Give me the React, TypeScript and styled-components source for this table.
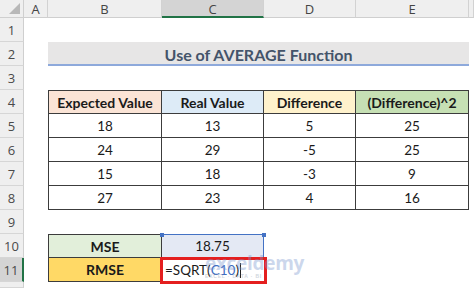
import React from "react";
import styled, { createGlobalStyle, css } from "styled-components";

const Global = createGlobalStyle`
  html, body { margin: 0; padding: 0; background: #ffffff; overflow: hidden; }
  #root { width: 474px; height: 288px; }
`;

const Sheet = styled.div`
  display: grid;
  grid-template-columns: 24px 24px 114px 102px 92px 113px 1fr;
  grid-template-rows: 18px repeat(11, 24px) 1fr;
  width: 474px;
  height: 288px;
  overflow: hidden;
  font-family: Lato, "Liberation Sans", sans-serif;
  background: #fff;
  position: relative;
`;

const Corner = styled.div`
  background: #efefef;
  border-right: 1px solid #cfcfcf;
  border-bottom: 1px solid #cfcfcf;
  box-sizing: border-box;
  position: relative;
  &::after {
    content: "";
    position: absolute;
    right: 3px;
    bottom: 3px;
    border-style: solid;
    border-width: 0 0 11px 11px;
    border-color: transparent transparent #b8b8b8 transparent;
  }
`;

const ColHeader = styled.div<{ $sel?: boolean }>`
  display: flex;
  align-items: center;
  justify-content: center;
  box-sizing: border-box;
  background: ${(p) => (p.$sel ? "#d4d4d4" : "#efefef")};
  border-right: 1px solid #d2d2d2;
  border-bottom: ${(p) => (p.$sel ? "2px solid #217346" : "1px solid #cfcfcf")};
  color: #444;
  font-family: "Open Sans", "Liberation Sans", sans-serif;
  font-size: 13px;
  padding-top: ${(p) => (p.$sel ? "1px" : "0")};
`;

const RowHeader = styled.div<{ $sel?: boolean }>`
  display: flex;
  align-items: center;
  justify-content: center;
  box-sizing: border-box;
  background: ${(p) => (p.$sel ? "#d4d4d4" : "#efefef")};
  border-bottom: 1px solid #d6d6d6;
  border-right: ${(p) => (p.$sel ? "2px solid #217346" : "1px solid #cfcfcf")};
  color: #4a4a4a;
  font-family: "Open Sans", "Liberation Sans", sans-serif;
  font-size: 13px;
`;

const Blank = styled.div<{ $span?: number }>`
  grid-column: span ${(p) => p.$span ?? 1};
`;

const Title = styled.div`
  grid-column: span 4;
  display: flex;
  align-items: center;
  justify-content: center;
  background: #e7e6e6;
  border-bottom: 2px solid #8ea9db;
  box-sizing: border-box;
  color: #44546a;
  font-weight: 700;
  font-size: 16px;
  padding-top: 2px;
`;

const TCell = styled.div<{ $bg?: string; $top?: boolean; $left?: boolean; $bold?: boolean }>`
  display: flex;
  align-items: center;
  justify-content: center;
  box-sizing: border-box;
  background: ${(p) => p.$bg ?? "#ffffff"};
  border-right: 1px solid #3c3c3c;
  border-bottom: 1px solid #3c3c3c;
  ${(p) => p.$top && css`border-top: 1px solid #3c3c3c;`}
  ${(p) => p.$left && css`border-left: 1px solid #3c3c3c;`}
  color: #1a1a1a;
  font-weight: ${(p) => (p.$bold ? 700 : 400)};
  font-size: ${(p) => (p.$bold ? "14px" : "13.5px")};
`;

const RefCell = styled.div`
  position: relative;
  display: flex;
  align-items: center;
  justify-content: center;
  box-sizing: border-box;
  background: #e4e9f4;
  border: 1px solid #4472c4;
  border-left: none;
  color: #1a1a1a;
  font-size: 13.5px;
`;

const Handle = styled.span<{ $side: "left" | "right" }>`
  position: absolute;
  top: -2px;
  ${(p) => (p.$side === "left" ? "left: -2px;" : "right: -3px;")}
  width: 4px;
  height: 4px;
  background: #4472c4;
`;

const EditCell = styled.div`
  position: relative;
  display: flex;
  align-items: center;
  justify-content: flex-start;
  box-sizing: border-box;
  background: #fff;
  padding-left: 3px;
  color: #1a1a1a;
  font-size: 13.5px;
`;

const RefText = styled.span`
  color: #3d6cc0;
`;

const Caret = styled.span`
  display: inline-block;
  width: 1px;
  height: 15px;
  background: #222;
  margin-left: 1px;
`;

const Highlight = styled.div`
  position: absolute;
  left: -2px;
  right: -3px;
  top: -1px;
  bottom: -2px;
  border: 3px solid #e41f1f;
  pointer-events: none;
`;

const Watermark = styled.div`
  position: absolute;
  left: 205px;
  top: 254px;
  display: flex;
  align-items: center;
  gap: 3px;
  opacity: 0.38;
  pointer-events: none;
`;

const WMText = styled.div`
  display: flex;
  flex-direction: column;
  line-height: 1;
`;

const WMBig = styled.span`
  font-family: "Open Sans", "Liberation Sans", sans-serif;
  font-weight: 700;
  font-size: 19px;
  color: #7c98cf;
  letter-spacing: -0.3px;
`;

const WMSmall = styled.span`
  font-family: "Liberation Sans", sans-serif;
  font-weight: 700;
  font-size: 5px;
  color: #8795aa;
  letter-spacing: 0.8px;
  margin-top: 1px;
`;

const cols = ["A", "B", "C", "D", "E", ""];
const headers: { label: string; bg: string }[] = [
  { label: "Expected Value", bg: "#fbe4d6" },
  { label: "Real Value", bg: "#ddebf7" },
  { label: "Difference", bg: "#fff2cc" },
  { label: "(Difference)^2", bg: "#c6e0b4" },
];
const data = [
  [18, 13, 5, 25],
  [24, 29, -5, 25],
  [15, 18, -3, 9],
  [27, 23, 4, 16],
];

export default function App() {
  return (
    <>
      <Global />
      <Sheet>
        <Corner />
        {cols.map((c, i) => (
          <ColHeader key={i} $sel={c === "C"}>
            {c}
          </ColHeader>
        ))}

        <RowHeader>1</RowHeader>
        <Blank $span={6} />

        <RowHeader>2</RowHeader>
        <Blank />
        <Title>Use of AVERAGE Function</Title>
        <Blank />

        <RowHeader>3</RowHeader>
        <Blank $span={6} />

        <RowHeader>4</RowHeader>
        <Blank />
        {headers.map((h, i) => (
          <TCell key={h.label} $bg={h.bg} $top $left={i === 0} $bold>
            {h.label}
          </TCell>
        ))}
        <Blank />

        {data.map((row, r) => (
          <React.Fragment key={r}>
            <RowHeader>{5 + r}</RowHeader>
            <Blank />
            {row.map((v, i) => (
              <TCell key={i} $left={i === 0}>
                {v}
              </TCell>
            ))}
            <Blank />
          </React.Fragment>
        ))}

        <RowHeader>9</RowHeader>
        <Blank $span={6} />

        <RowHeader>10</RowHeader>
        <Blank />
        <TCell $bg="#e2efda" $top $left $bold>
          MSE
        </TCell>
        <RefCell>
          <Handle $side="left" />
          <Handle $side="right" />
          18.75
        </RefCell>
        <Blank $span={3} />

        <RowHeader $sel>11</RowHeader>
        <Blank />
        <TCell $bg="#ffd966" $left $bold>
          RMSE
        </TCell>
        <EditCell>
          =SQRT(<RefText>C10</RefText>)<Caret />
          <Highlight />
        </EditCell>
        <Blank $span={3} />

        <RowHeader />
        <Blank $span={6} />

        <Watermark>
          <WMText>
            <WMBig>exceldemy</WMBig>
            <WMSmall>EXCEL · DATA · BI</WMSmall>
          </WMText>
        </Watermark>
      </Sheet>
    </>
  );
}
